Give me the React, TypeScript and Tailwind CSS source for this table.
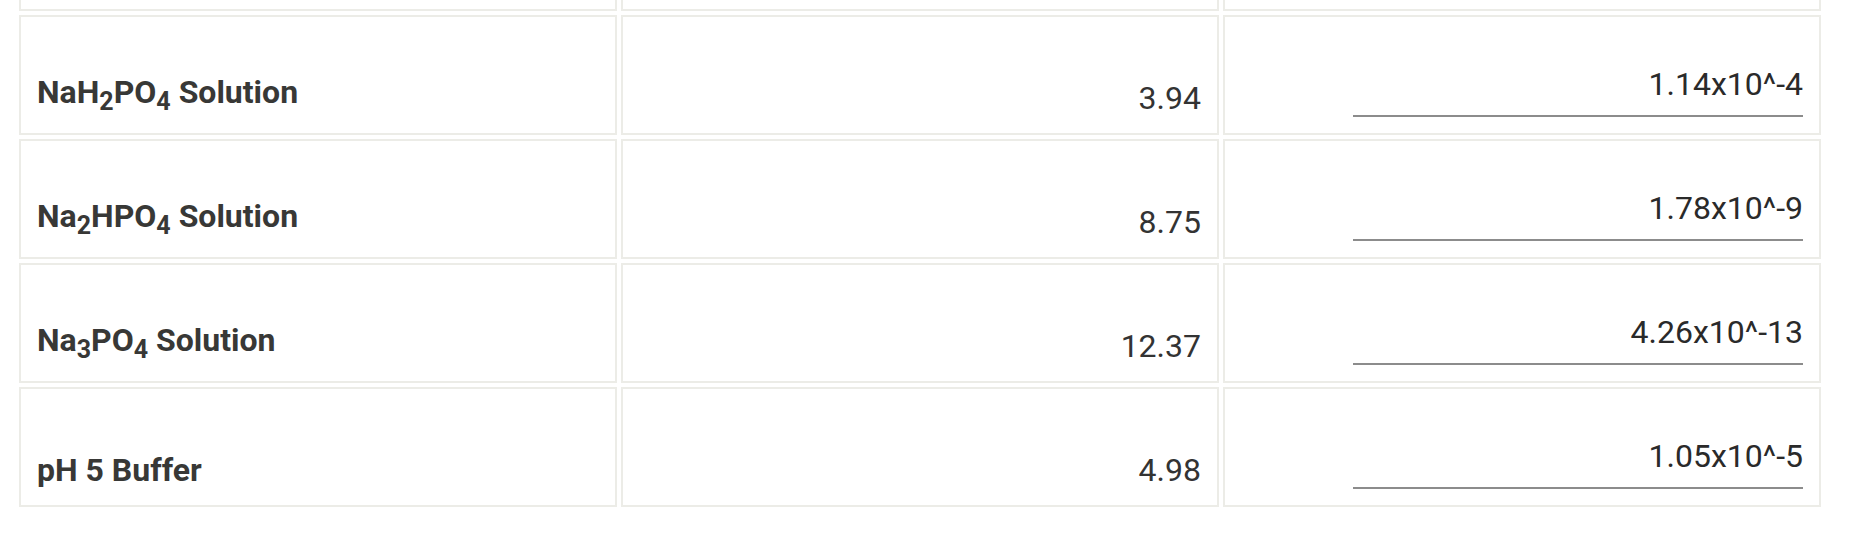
import React from "react";

type Row = { name: React.ReactNode; ph: string; ka: string };

const Sub = ({ children }: { children: React.ReactNode }) => (
  <sub className="static align-sub text-[25px] leading-[30px]">{children}</sub>
);

const rows: Row[] = [
  {
    name: (
      <>
        NaH<Sub>2</Sub>PO<Sub>4</Sub> Solution
      </>
    ),
    ph: "3.94",
    ka: "1.14x10^-4",
  },
  {
    name: (
      <>
        Na<Sub>2</Sub>HPO<Sub>4</Sub> Solution
      </>
    ),
    ph: "8.75",
    ka: "1.78x10^-9",
  },
  {
    name: (
      <>
        Na<Sub>3</Sub>PO<Sub>4</Sub> Solution
      </>
    ),
    ph: "12.37",
    ka: "4.26x10^-13",
  },
  { name: <>pH 5 Buffer</>, ph: "4.98", ka: "1.05x10^-5" },
];

export default function App() {
  return (
    <div className="w-[1852px] h-[544px] bg-white overflow-hidden font-['Roboto',sans-serif] text-[#333333]">
      <div className="ml-[19px] flex flex-col gap-[4px]">
        <div className="grid grid-cols-[598px_598px_598px] gap-[4px]">
          <div className="h-[11px] border-x-2 border-b-2 border-[#ecece7]" />
          <div className="h-[11px] border-x-2 border-b-2 border-[#ecece7]" />
          <div className="h-[11px] border-x-2 border-b-2 border-[#ecece7]" />
        </div>
        {rows.map((r, i) => (
          <div key={i} className="grid grid-cols-[598px_598px_598px] gap-[4px]">
            <div className="h-[120px] border-2 border-[#ecece7] px-4 pb-4 flex items-end">
              <div className="text-[32px] font-bold leading-[normal] text-[#383836]">{r.name}</div>
            </div>
            <div className="h-[120px] border-2 border-[#ecece7] px-4 pb-4 flex items-end justify-end">
              <div className="text-[32px] leading-[normal]">{r.ph}</div>
            </div>
            <div className="h-[120px] border-2 border-[#ecece7] px-4 pb-4 flex items-end justify-end">
              <div className="w-[450px] border-b-2 border-[#8c8c8c] pb-[12px] text-right text-[32px] leading-[normal] text-[#2a2a2a]">
                {r.ka}
              </div>
            </div>
          </div>
        ))}
      </div>
    </div>
  );
}
